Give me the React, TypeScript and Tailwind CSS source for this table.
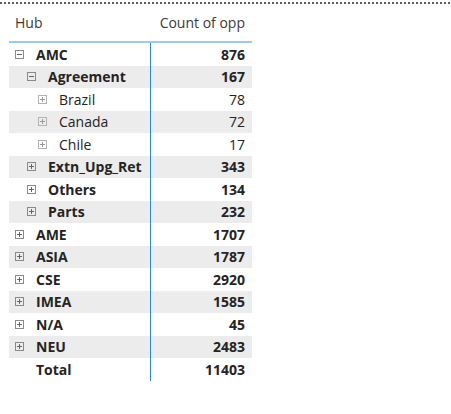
import React from 'react';

type Row = {
  label: string;
  value: string;
  level: number;
  icon: 'plus' | 'minus' | 'none';
  bold: boolean;
};

const ROWS: Row[] = [
  { label: 'AMC', value: '876', level: 0, icon: 'minus', bold: true },
  { label: 'Agreement', value: '167', level: 1, icon: 'minus', bold: true },
  { label: 'Brazil', value: '78', level: 2, icon: 'plus', bold: false },
  { label: 'Canada', value: '72', level: 2, icon: 'plus', bold: false },
  { label: 'Chile', value: '17', level: 2, icon: 'plus', bold: false },
  { label: 'Extn_Upg_Ret', value: '343', level: 1, icon: 'plus', bold: true },
  { label: 'Others', value: '134', level: 1, icon: 'plus', bold: true },
  { label: 'Parts', value: '232', level: 1, icon: 'plus', bold: true },
  { label: 'AME', value: '1707', level: 0, icon: 'plus', bold: true },
  { label: 'ASIA', value: '1787', level: 0, icon: 'plus', bold: true },
  { label: 'CSE', value: '2920', level: 0, icon: 'plus', bold: true },
  { label: 'IMEA', value: '1585', level: 0, icon: 'plus', bold: true },
  { label: 'N/A', value: '45', level: 0, icon: 'plus', bold: true },
  { label: 'NEU', value: '2483', level: 0, icon: 'plus', bold: true },
  { label: 'Total', value: '11403', level: 0, icon: 'none', bold: true },
];

const ExpandIcon = ({ kind, light }: { kind: 'plus' | 'minus'; light: boolean }) => (
  <svg width="9" height="9" viewBox="0 0 9 9" className="shrink-0">
    <rect x="0.5" y="0.5" width="8" height="8" fill="none" stroke={light ? '#b3b3b3' : '#8a8a8a'} />
    <line x1="2" y1="4.5" x2="7" y2="4.5" stroke={light ? '#9a9a9a' : '#666'} />
    {kind === 'plus' && <line x1="4.5" y1="2" x2="4.5" y2="7" stroke={light ? '#9a9a9a' : '#666'} />}
  </svg>
);

const indent = ['pl-[6px]', 'pl-[18px]', 'pl-[29px]'];

const App: React.FC = () => {
  return (
    <div className="w-[451px] h-[414px] bg-white text-[#252423] font-['Open_Sans',sans-serif]">
      <div className="h-[2px] mt-[2px] bg-[linear-gradient(to_right,#5c5c5c_50%,transparent_50%)] bg-[length:4px_2px]" />
      <div className="ml-[9px] w-[243px]">
        <div className="flex h-[37px] items-center text-[14px] text-[#3b3a39]">
          <div className="w-[142px] pl-[6px]">Hub</div>
          <div className="flex-1 text-right pr-[7px]">Count of opp</div>
        </div>
        <div className="h-[2px] bg-[#99c9f5]" />
        {ROWS.map((r, i) => (
          <div
            key={r.label}
            className={`flex h-[22.5px] items-center text-[14px] ${i % 2 === 1 ? 'bg-[#ececec]' : 'bg-white'} ${r.bold ? 'font-bold' : ''}`}
          >
            <div className={`w-[142px] h-full flex items-center border-r border-[#2b87e3] ${indent[r.level]}`}>
              <div className="w-[9px] mr-[12px] flex items-center">
                {r.icon !== 'none' && <ExpandIcon kind={r.icon} light={r.level === 2} />}
              </div>
              <span className="whitespace-nowrap">{r.label}</span>
            </div>
            <div className="flex-1 text-right pr-[7px]">{r.value}</div>
          </div>
        ))}
      </div>
    </div>
  );
};

export default App;
